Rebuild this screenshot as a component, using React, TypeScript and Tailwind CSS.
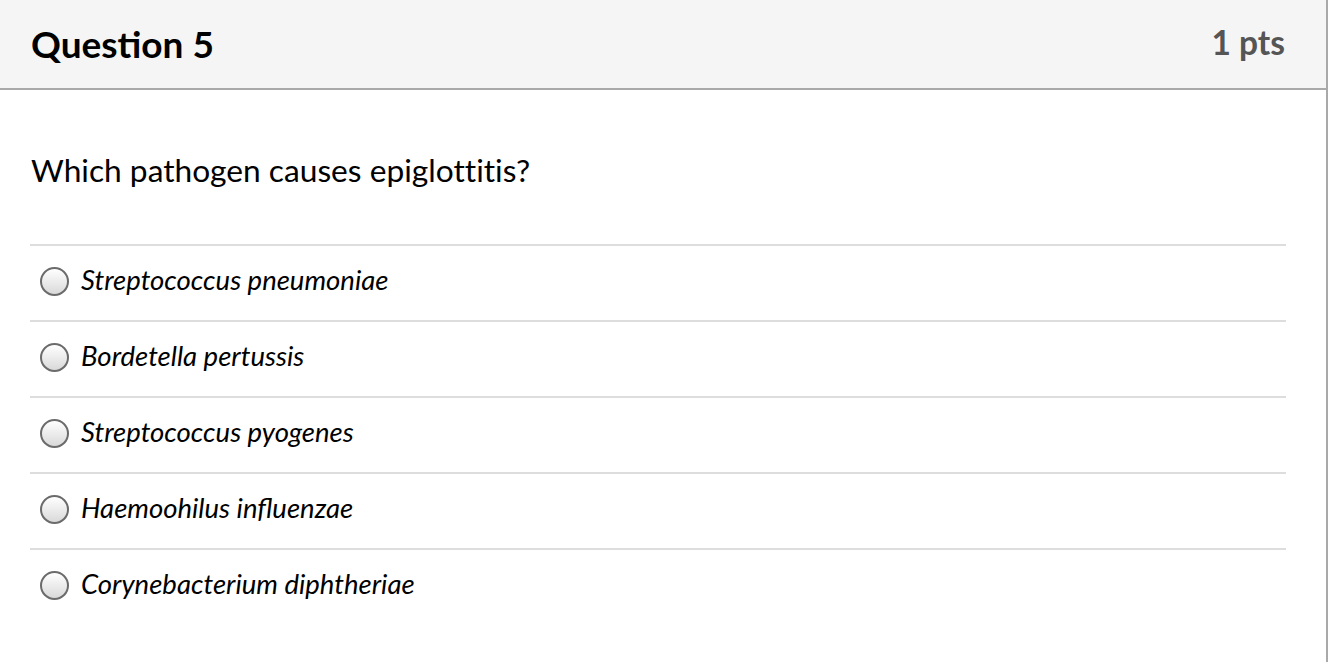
import React from 'react';

const options = [
  'Streptococcus pneumoniae',
  'Bordetella pertussis',
  'Streptococcus pyogenes',
  'Haemoohilus influenzae',
  'Corynebacterium diphtheriae',
];

const Radio: React.FC = () => (
  <span className="block w-[29px] h-[29px] -mt-[3px] rounded-full border-2 border-[#6b6b6b] bg-gradient-to-b from-white to-[#d9d9d9] shrink-0" />
);

export default function App() {
  return (
    <div className="w-[1329px] h-[662px] bg-white font-['Lato',sans-serif] text-black overflow-hidden">
      <div className="w-[1328px] h-full border-r-2 border-[#a9a9a9]">
        <div className="h-[90px] bg-[#f5f5f5] border-b-2 border-[#a9a9a9] flex items-center justify-between pl-[31px] pr-[41px]">
          <h2 className="text-[37px] font-bold leading-none -mt-[2px]">Question 5</h2>
          <span className="text-[33.5px] font-bold leading-none text-[#555555] -mt-[2px]">1 pts</span>
        </div>
        <div className="px-[30px]">
          <p className="text-[31.7px] leading-none h-[154px] pt-[65px] pl-px [font-variant-ligatures:none]">
            Which pathogen causes epiglottitis?
          </p>
          <div>
            {options.map((opt) => (
              <div key={opt} className="h-[76px] border-t-2 border-[#dddddd] flex items-center pl-[10px] pr-[12px] w-[1256px]">
                <Radio />
                <span className="ml-[12px] text-[27.5px] italic leading-none -mt-[6px]">{opt}</span>
              </div>
            ))}
          </div>
        </div>
      </div>
    </div>
  );
}
